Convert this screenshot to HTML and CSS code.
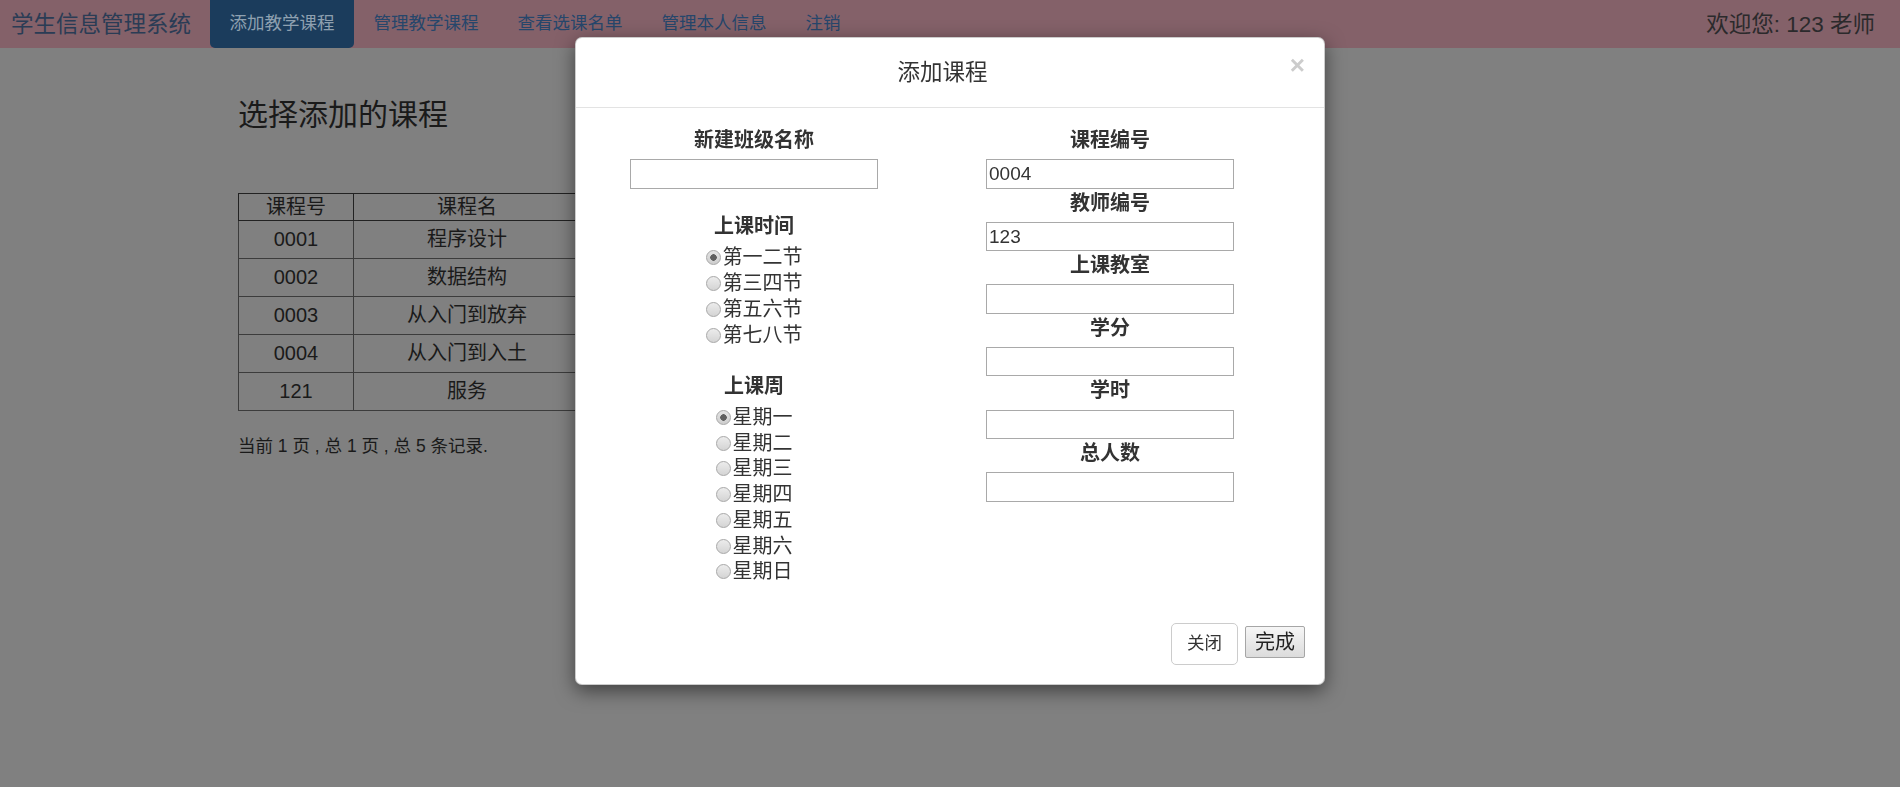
FILE: index.html
```html
<!DOCTYPE html>
<html lang="zh-CN">
<head>
  <meta charset="UTF-8" />
  <meta name="viewport" content="width=device-width, initial-scale=1.0"/>
  <title>学生信息管理系统</title>
  <link rel="stylesheet" href="styles.css">
</head>
<body>
  <nav class="navbar">
    <span class="brand">学生信息管理系统</span>
    <ul class="nav">
      <li class="active"><a href="#">添加教学课程</a></li>
      <li><a href="#">管理教学课程</a></li>
      <li><a href="#">查看选课名单</a></li>
      <li><a href="#">管理本人信息</a></li>
      <li><a href="#">注销</a></li>
    </ul>
    <span class="welcome">欢迎您: 123 老师</span>
  </nav>

  <div class="container">
    <h3 class="page-title">选择添加的课程</h3>
    <table class="course-table">
      <thead>
        <tr><th class="col-id">课程号</th><th class="col-name">课程名</th><th class="col-extra">学分</th><th class="col-extra">操作</th></tr>
      </thead>
      <tbody>
        <tr><td>0001</td><td>程序设计</td><td>3</td><td>添加</td></tr>
        <tr><td>0002</td><td>数据结构</td><td>4</td><td>添加</td></tr>
        <tr><td>0003</td><td>从入门到放弃</td><td>2</td><td>添加</td></tr>
        <tr><td>0004</td><td>从入门到入土</td><td>2</td><td>添加</td></tr>
        <tr><td>121</td><td>服务</td><td>1</td><td>添加</td></tr>
      </tbody>
    </table>
    <p class="pager">当前 1 页 , 总 1 页 , 总 5 条记录.</p>
  </div>

  <div class="modal">
    <div class="modal-dialog">
      <div class="modal-content">
        <div class="modal-header">
          <h4 class="modal-title">添加课程</h4>
          <button class="close" type="button">&times;</button>
        </div>
        <div class="modal-body">
          <div class="col">
            <div class="field">
              <label class="field-title" for="className">新建班级名称</label>
              <input type="text" id="className">
            </div>
            <div class="field">
              <span class="field-title">上课时间</span>
              <label class="option"><input type="radio" name="time" checked>第一二节</label>
              <label class="option"><input type="radio" name="time">第三四节</label>
              <label class="option"><input type="radio" name="time">第五六节</label>
              <label class="option"><input type="radio" name="time">第七八节</label>
            </div>
            <div class="field">
              <span class="field-title">上课周</span>
              <label class="option"><input type="radio" name="week" checked>星期一</label>
              <label class="option"><input type="radio" name="week">星期二</label>
              <label class="option"><input type="radio" name="week">星期三</label>
              <label class="option"><input type="radio" name="week">星期四</label>
              <label class="option"><input type="radio" name="week">星期五</label>
              <label class="option"><input type="radio" name="week">星期六</label>
              <label class="option"><input type="radio" name="week">星期日</label>
            </div>
          </div>
          <div class="col col-stack">
            <label class="field-title" for="courseId">课程编号</label>
            <input type="text" id="courseId" value="0004">
            <label class="field-title" for="teacherId">教师编号</label>
            <input type="text" id="teacherId" value="123">
            <label class="field-title" for="room">上课教室</label>
            <input type="text" id="room">
            <label class="field-title" for="credit">学分</label>
            <input type="text" id="credit">
            <label class="field-title" for="hours">学时</label>
            <input type="text" id="hours">
            <label class="field-title" for="total">总人数</label>
            <input type="text" id="total">
          </div>
        </div>
        <div class="modal-footer">
          <button type="button" class="btn">关闭</button>
          <button type="submit" class="btn-plain">完成</button>
        </div>
      </div>
    </div>
  </div>
</body>
</html>
```

FILE: styles.css
```css
body {
  margin: 0;
  background-color: #808080;
  font-family: "Liberation Sans", "Noto Sans CJK SC", sans-serif;
  font-size: 17.5px;
  line-height: 25px;
  color: #1a1a1a;
}
.navbar {
  display: flex;
  align-items: center;
  height: 48px;
  padding: 0 25px 0 11px;
  background-color: #846169;
}
.brand {
  font-size: 22.5px;
  color: #2a3c55;
  padding-right: 19px;
}
.nav {
  display: flex;
  align-self: stretch;
  list-style: none;
  margin: 0;
  padding: 0;
}
.nav a {
  display: flex;
  align-items: center;
  height: 100%;
  padding: 0 19.5px 1px;
  box-sizing: border-box;
  font-size: 17.5px;
  color: #26466b;
  text-decoration: none;
}
.nav .active a {
  background-color: #1b3c5c;
  color: #8ea0b0;
  border-radius: 0 0 5px 5px;
}
.welcome {
  margin-left: auto;
  font-size: 22.5px;
  color: #2b2a2c;
}
.container {
  max-width: 1462px;
  margin: 0 auto;
  padding: 0 19px;
  box-sizing: border-box;
}
.page-title {
  margin: 50px 0 0;
  font-size: 30px;
  line-height: 33px;
  font-weight: normal;
  color: #1a1a1a;
}
.course-table {
  margin-top: 62px;
  border-collapse: collapse;
  border: 1px solid #111;
  font-size: 20px;
  text-align: center;
}
.course-table th {
  font-weight: normal;
  line-height: 26px;
  padding: 0;
  border: 1px solid #222;
}
.course-table td {
  line-height: 25px;
  padding: 6px 0;
  border: 1px solid #3c3c3c;
}
.col-id { width: 114px; }
.col-name { width: 226px; }
.col-extra { width: 150px; }
.pager {
  margin: 23px 0 0;
  font-size: 17.5px;
}

/* modal */
.modal {
  position: fixed;
  top: 0;
  left: 0;
  right: 0;
  bottom: 0;
}
.modal-dialog {
  width: 750px;
  margin: 37px auto 0;
}
.modal-content {
  background-color: #fff;
  border: 1px solid rgba(0, 0, 0, 0.2);
  border-radius: 7px;
  box-shadow: 0 6px 19px rgba(0, 0, 0, 0.5);
  color: #333;
}
.modal-header {
  display: flex;
  align-items: flex-start;
  padding: 18px 19px;
  border-bottom: 1px solid #e3e3e3;
}
.modal-title {
  flex: 1;
  margin: 0;
  text-align: center;
  font-size: 22.5px;
  line-height: 33px;
  font-weight: normal;
}
.close {
  margin-top: -4px;
  padding: 0;
  border: none;
  background: none;
  font-family: "Liberation Sans", sans-serif;
  font-size: 26px;
  font-weight: bold;
  line-height: 26px;
  color: #ccc;
  cursor: pointer;
}
.modal-body {
  display: grid;
  grid-template-columns: 356px 356px;
  padding: 18px 0 19px;
  text-align: center;
}
.field-title {
  display: block;
  font-size: 20px;
  font-weight: bold;
  line-height: 28.3px;
  margin-bottom: 5px;
  color: #333;
}
.field + .field {
  margin-top: 23.5px;
}
.modal-body input[type="text"] {
  display: block;
  width: 248px;
  height: 29.3px;
  margin: 0 auto;
  padding: 0 2px;
  box-sizing: border-box;
  border: 1px solid #a9a9a9;
  font-family: "Liberation Sans", sans-serif;
  font-size: 19px;
  color: #333;
}
.option {
  display: block;
  font-size: 20px;
  line-height: 25.7px;
  color: #333;
}
.option input[type="radio"] {
  appearance: none;
  -webkit-appearance: none;
  width: 15px;
  height: 15px;
  margin: 0 2px 0 0;
  vertical-align: -1px;
  border: 1px solid #a8a8a8;
  border-radius: 50%;
  background: linear-gradient(#ececec, #d4d4d4);
  box-sizing: border-box;
}
.option input[type="radio"]:checked {
  background: radial-gradient(circle, #5f5f5f 0, #5f5f5f 3px, transparent 3.5px), linear-gradient(#e4e4e4, #cdcdcd);
}
.modal-footer {
  display: flex;
  justify-content: flex-end;
  align-items: baseline;
  gap: 7px;
  padding: 19px;
}
.btn {
  padding: 7.5px 15px;
  font-family: inherit;
  font-size: 17.5px;
  line-height: 25px;
  color: #333;
  background-color: #fff;
  border: 1px solid #ccc;
  border-radius: 5px;
  cursor: pointer;
}
.btn-plain {
  padding: 2px 9px;
  font-family: inherit;
  font-size: 20px;
  line-height: 26px;
  color: #222;
  background: linear-gradient(#f6f6f6, #dcdcdc);
  border: 1px solid #a6a6a6;
  border-radius: 2px;
}
```
